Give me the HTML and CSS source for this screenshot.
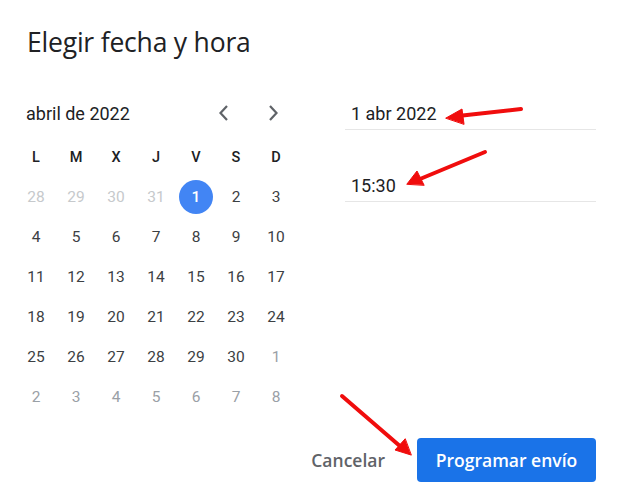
FILE: index.html
```html
<!DOCTYPE html>
<html lang="es">
<head>
<meta charset="utf-8">
<title>Elegir fecha y hora</title>
<link rel="stylesheet" href="styles.css">
</head>
<body>
<div class="dialog">
  <h1 class="title">Elegir fecha y hora</h1>
  <div class="content">
    <div class="calendar">
      <div class="month-row">
        <span class="month">abril de 2022</span>
        <div class="navs">
          <button class="nav" aria-label="anterior"><svg width="24" height="24" viewBox="0 0 24 24"><path d="M15 5 8.5 12l6.5 7" fill="none" stroke="#5f6368" stroke-width="2.2"/></svg></button>
          <button class="nav" aria-label="siguiente"><svg width="24" height="24" viewBox="0 0 24 24"><path d="M9 5l6.5 7L9 19" fill="none" stroke="#5f6368" stroke-width="2.2"/></svg></button>
        </div>
      </div>
      <div class="grid">
        <span class="dow">L</span><span class="dow">M</span><span class="dow">X</span><span class="dow">J</span><span class="dow">V</span><span class="dow">S</span><span class="dow">D</span>
        <span class="day prev">28</span><span class="day prev">29</span><span class="day prev">30</span><span class="day prev">31</span><span class="day sel"><span class="dot">1</span></span><span class="day">2</span><span class="day">3</span>
        <span class="day">4</span><span class="day">5</span><span class="day">6</span><span class="day">7</span><span class="day">8</span><span class="day">9</span><span class="day">10</span>
        <span class="day">11</span><span class="day">12</span><span class="day">13</span><span class="day">14</span><span class="day">15</span><span class="day">16</span><span class="day">17</span>
        <span class="day">18</span><span class="day">19</span><span class="day">20</span><span class="day">21</span><span class="day">22</span><span class="day">23</span><span class="day">24</span>
        <span class="day">25</span><span class="day">26</span><span class="day">27</span><span class="day">28</span><span class="day">29</span><span class="day">30</span><span class="day next">1</span>
        <span class="day next">2</span><span class="day next">3</span><span class="day next">4</span><span class="day next">5</span><span class="day next">6</span><span class="day next">7</span><span class="day next">8</span>
      </div>
    </div>
    <div class="fields">
      <div class="field">1 abr 2022</div>
      <div class="field">15:30</div>
    </div>
  </div>
  <div class="actions">
    <button class="btn cancel">Cancelar</button>
    <button class="btn primary">Programar envío</button>
  </div>
</div>
<svg class="annot" width="626" height="495" viewBox="0 0 626 495">
  <g stroke="#f00d0d" stroke-width="4" stroke-linecap="round" fill="#f00d0d">
    <line x1="521" y1="109" x2="458" y2="116"/>
    <polygon points="446,118 462,109 464,124" stroke-width="1" stroke-linejoin="round"/>
    <line x1="485" y1="152" x2="420" y2="179"/>
    <polygon points="407,184 417,171 424,185" stroke-width="1" stroke-linejoin="round"/>
    <line x1="342" y1="396" x2="401" y2="447"/>
    <polygon points="411,455 395,450 405,439" stroke-width="1" stroke-linejoin="round"/>
  </g>
</svg>
</body>
</html>
```
FILE: styles.css
```css
* { box-sizing: border-box; }
html, body { margin: 0; padding: 0; background: #fff; }
body {
  width: 626px;
  height: 495px;
  position: relative;
  overflow: hidden;
  font-family: Roboto, "Liberation Sans", sans-serif;
  color: #3c4043;
}
.dialog {
  padding: 26px 30px 0 0;
  display: flex;
  flex-direction: column;
}
.title {
  margin: 0 0 0 27px;
  font-family: "Open Sans", Roboto, sans-serif;
  font-weight: 400;
  font-size: 26.5px;
  line-height: 32px;
  color: #202124;
  letter-spacing: -0.2px;
}
.content {
  display: flex;
  margin-top: 35px;
}
.calendar {
  margin-left: 16px;
  width: 280px;
}
.month-row {
  display: flex;
  align-items: center;
  justify-content: space-between;
  height: 40px;
  padding-left: 10px;
}
.month {
  font-size: 18px;
  color: #202124;
}
.navs {
  display: flex;
  gap: 1px;
  margin-right: -1px;
}
.nav {
  width: 48px;
  height: 40px;
  border: 0;
  background: none;
  padding: 0;
  display: flex;
  align-items: center;
  justify-content: center;
}
.grid {
  display: grid;
  grid-template-columns: repeat(7, 40px);
  grid-auto-rows: 40px;
  margin-top: 4px;
}
.dow, .day {
  display: flex;
  align-items: center;
  justify-content: center;
  font-size: 15.5px;
}
.dow {
  font-weight: 500;
  color: #202124;
  font-size: 14.5px;
}
.day { color: #3c4043; }
.day.prev { color: #c6c9cc; }
.day.next { color: #9aa0a6; }
.dot {
  width: 34px;
  height: 34px;
  border-radius: 50%;
  background: #4285f4;
  color: #fff;
  font-weight: 500;
  display: flex;
  align-items: center;
  justify-content: center;
}
.fields {
  margin-left: 49px;
  width: 251px;
  display: flex;
  flex-direction: column;
  gap: 40px;
  padding-top: 5px;
}
.field {
  height: 32px;
  padding: 4px 0 0 6px;
  font-size: 18px;
  line-height: 24px;
  color: #202124;
  border-bottom: 1px solid #e6e6e6;
}
.actions {
  display: flex;
  justify-content: flex-end;
  align-items: center;
  gap: 16px;
  margin-top: 21px;
}
.btn {
  height: 44px;
  border: 0;
  border-radius: 4px;
  font-family: "Open Sans", Roboto, sans-serif;
  font-size: 17.5px;
  font-weight: 600;
  padding: 0 16px;
  background: none;
}
.cancel { color: #5f6368; }
.primary {
  background: #1a73e8;
  color: #fff;
  width: 179px;
  padding: 0;
}
.annot {
  position: absolute;
  left: 0;
  top: 0;
  pointer-events: none;
}
```
